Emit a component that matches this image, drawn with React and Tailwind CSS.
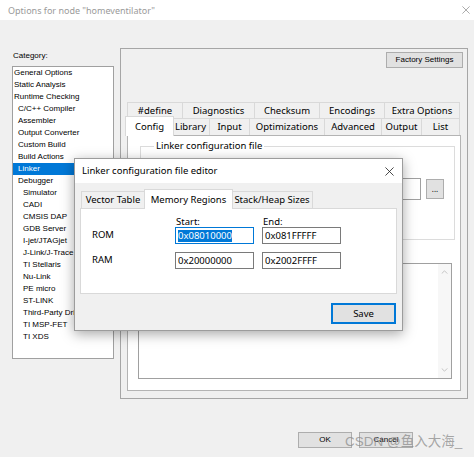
import React from "react";

const cats = [
  ["General Options", "pl-[1px]"],
  ["Static Analysis", "pl-[1px]"],
  ["Runtime Checking", "pl-[1px]"],
  ["C/C++ Compiler", "pl-[5px]"],
  ["Assembler", "pl-[5px]"],
  ["Output Converter", "pl-[5px]"],
  ["Custom Build", "pl-[5px]"],
  ["Build Actions", "pl-[5px]"],
  ["Linker", "pl-[5px]", true],
  ["Debugger", "pl-[5px]"],
  ["Simulator", "pl-[10px]"],
  ["CADI", "pl-[10px]"],
  ["CMSIS DAP", "pl-[10px]"],
  ["GDB Server", "pl-[10px]"],
  ["I-jet/JTAGjet", "pl-[10px]"],
  ["J-Link/J-Trace", "pl-[10px]"],
  ["TI Stellaris", "pl-[10px]"],
  ["Nu-Link", "pl-[10px]"],
  ["PE micro", "pl-[10px]"],
  ["ST-LINK", "pl-[10px]"],
  ["Third-Party Driver", "pl-[10px]"],
  ["TI MSP-FET", "pl-[10px]"],
  ["TI XDS", "pl-[10px]"],
];

const row1 = [
  ["#define", "w-[56px] border-l"],
  ["Diagnostics", "w-[72px]"],
  ["Checksum", "w-[65px]"],
  ["Encodings", "w-[65px]"],
  ["Extra Options", "w-[75px]"],
];

const row2 = [
  ["Library", "w-[38px]"],
  ["Input", "w-[40px]"],
  ["Optimizations", "w-[75px]"],
  ["Advanced", "w-[57px]"],
  ["Output", "w-[40px]"],
  ["List", "w-[38px]"],
];

function XIcon({ className, stroke }) {
  return (
    <svg viewBox="0 0 10 10" className={className}>
      <path d="M0.5 0.5L9.5 9.5M9.5 0.5L0.5 9.5" stroke={stroke} strokeWidth="0.9" fill="none" />
    </svg>
  );
}

function Chevron({ up }) {
  return (
    <svg viewBox="0 0 8 5" className="w-[7px] h-[4px]">
      <path d={up ? "M0.5 4.5L4 1L7.5 4.5" : "M0.5 0.5L4 4L7.5 0.5"} stroke="#b8b8b8" strokeWidth="1" fill="none" />
    </svg>
  );
}

export default function App() {
  return (
    <div className="relative w-[474px] h-[457px] overflow-hidden bg-[#f0f0f0] text-black font-['Liberation_Sans',Arial,sans-serif]">
      {/* title bar */}
      <div className="h-[20px] bg-white flex items-center justify-between pl-[8px] pr-[4px]">
        <span className="text-[9px] leading-none text-[#9a9a9a] font-['Noto_Sans',sans-serif]">
          Options for node "homeventilator"
        </span>
        <XIcon className="w-[8px] h-[8px]" stroke="#8c8c8c" />
      </div>

      <div className="flex">
        {/* category column */}
        <div className="ml-[12px] mt-[31px] w-[102px] flex flex-col">
          <div className="h-[10px] text-[8px] leading-[10px] pl-[1px]">Category:</div>
          <div className="mt-[5px] h-[293px] bg-white border border-[#a0a0a0] overflow-hidden">
            {cats.map(([t, pad, sel]) => (
              <div
                key={t}
                className={`h-[12px] text-[8px] leading-[12px] whitespace-nowrap ${pad} ${
                  sel ? "bg-[#0078d7] text-white" : ""
                }`}
              >
                {t}
              </div>
            ))}
          </div>
        </div>

        {/* right group */}
        <div className="ml-[6px] mt-[28px] w-[348px] h-[351px] border border-[#a6a6a6] flex flex-col">
          <button className="self-end mt-[3px] mr-[4px] w-[77px] h-[16px] bg-[#e1e1e1] border border-[#adadad] text-[8px] leading-none">
            Factory Settings
          </button>
          <div className="mt-[34px] mx-[6px] flex flex-col font-['Noto_Sans',sans-serif]">
            <div className="flex h-[16px]">
              {row1.map(([t, c]) => (
                <div
                  key={t}
                  className={`${c} flex items-center justify-center border-t border-r border-[#d9d9d9] bg-[#f0f0f0] text-[9.5px] leading-none`}
                >
                  {t}
                </div>
              ))}
            </div>
            <div className="flex h-[17px] items-end">
              <div className="relative z-10 w-[49px] h-[20px] -ml-[2px] -mr-[2px] -mb-px flex items-center justify-center bg-white border border-b-0 border-[#d9d9d9] text-[9.5px] leading-none">
                Config
              </div>
              {row2.map(([t, c]) => (
                <div
                  key={t}
                  className={`${c} h-[17px] flex items-center justify-center border-t border-r border-[#d9d9d9] bg-[#f0f0f0] text-[9.5px] leading-none`}
                >
                  {t}
                </div>
              ))}
            </div>
            <div className="h-[256px] bg-white border border-[#b4b4b4] flex flex-col">
              <fieldset className="mt-[4px] ml-[12px] mr-[5px] h-[100px] border border-[#dcdcdc] pl-[9px] pr-[10px]">
                <legend className="ml-[4px] px-[2px] text-[9.5px] leading-[12px]">Linker configuration file</legend>
                <div className="mt-[26px] flex items-center gap-[5px]">
                  <div className="flex-1 h-[22px] border border-[#a0a0a0] bg-white" />
                  <button className="w-[18px] h-[20px] bg-[#e1e1e1] border border-[#adadad] text-[8px] leading-none">
                    ...
                  </button>
                </div>
              </fieldset>
              <div className="mt-[23px] ml-[10px] mr-[8px] h-[116px] border border-[#a0a0a0] flex justify-end">
                <div className="w-[13px] bg-[#f7f7f7] flex flex-col items-center justify-between py-[6px]">
                  <Chevron up />
                  <Chevron />
                </div>
              </div>
            </div>
          </div>
        </div>
      </div>

      {/* OK / Cancel */}
      <div className="mt-[33px] flex justify-end gap-[7px] pr-[61px]">
        <button className="w-[54px] h-[16px] bg-[#e1e1e1] border border-[#adadad] text-[8px] leading-none">OK</button>
        <button className="w-[54px] h-[16px] bg-[#e1e1e1] border border-[#adadad] text-[8px] leading-none">Cancel</button>
      </div>

      {/* Linker configuration file editor dialog */}
      <div className="absolute left-[74px] top-[158px] w-[329px] h-[173px] bg-[#f0f0f0] border border-[#9c9c9c] shadow-[0_3px_12px_rgba(0,0,0,0.35)] flex flex-col font-['Noto_Sans',sans-serif]">
        <div className="h-[24px] shrink-0 bg-white flex items-center justify-between pl-[7px] pr-[8px]">
          <span className="text-[9.5px] leading-none">Linker configuration file editor</span>
          <XIcon className="w-[9px] h-[9px]" stroke="#222" />
        </div>
        <div className="flex flex-col px-[5px] pt-[5px]">
          <div className="flex items-end h-[20px] pl-[1px]">
            <div className="w-[64px] h-[17px] flex items-center justify-center border border-b-0 border-[#d9d9d9] bg-[#f0f0f0] text-[9.5px] leading-none">
              Vector Table
            </div>
            <div className="relative z-10 w-[89px] h-[20px] -ml-[1px] -mr-[1px] -mb-px flex items-center justify-center border border-b-0 border-[#d9d9d9] bg-white text-[9.5px] leading-none">
              Memory Regions
            </div>
            <div className="w-[81px] h-[17px] flex items-center justify-center border border-b-0 border-l-0 border-[#d9d9d9] bg-[#f0f0f0] text-[9.5px] leading-none">
              Stack/Heap Sizes
            </div>
          </div>
          <div className="h-[86px] bg-white border border-[#d9d9d9] pt-[8px] pl-[11px] flex flex-col">
            <div className="flex h-[10px] text-[9.5px] leading-[10px]">
              <div className="w-[84px]" />
              <div className="w-[87px]">Start:</div>
              <div>End:</div>
            </div>
            <div className="flex items-center h-[17px] text-[9.5px]">
              <div className="w-[83px]">ROM</div>
              <div className="w-[79px] h-[17px] border border-[#0078d7] flex items-center pl-[2px]">
                <span className="bg-[#0078d7] text-white leading-[12px]">0x08010000</span>
              </div>
              <div className="ml-[8px] w-[79px] h-[17px] border border-[#7a7a7a] flex items-center pl-[2px] leading-none">
                0x081FFFFF
              </div>
            </div>
            <div className="mt-[8px] flex items-center h-[17px] text-[9.5px]">
              <div className="w-[83px]">RAM</div>
              <div className="w-[79px] h-[17px] border border-[#7a7a7a] flex items-center pl-[2px] leading-none">
                0x20000000
              </div>
              <div className="ml-[8px] w-[79px] h-[17px] border border-[#7a7a7a] flex items-center pl-[2px] leading-none">
                0x2002FFFF
              </div>
            </div>
          </div>
          <div className="mt-[9px] flex justify-end pr-[1px]">
            <button className="w-[65px] h-[21px] bg-[#e1e1e1] border-2 border-[#0078d7] text-[9.5px] leading-none">
              Save
            </button>
          </div>
        </div>
      </div>

      {/* watermark */}
      <div className="absolute left-[345px] top-[435px] text-[13.5px] leading-none whitespace-nowrap text-[rgba(140,140,140,0.75)] font-['Liberation_Sans','Noto_Sans_CJK_SC',sans-serif]">
        CSDN @鱼入大海_
      </div>
    </div>
  );
}
